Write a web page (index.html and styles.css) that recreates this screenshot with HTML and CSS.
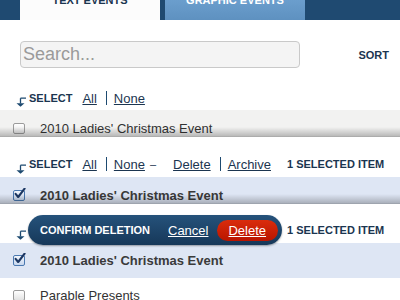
FILE: index.html
```html
<!DOCTYPE html>
<html>
<head>
<meta charset="utf-8">
<link rel="stylesheet" href="styles.css">
</head>
<body>
<div class="tabs">
  <div class="tab tab-active"><span class="tab-label">TEXT EVENTS</span></div>
  <div class="tab tab-graphic"><span class="tab-label">GRAPHIC EVENTS</span></div>
</div>

<div class="search-row">
  <input class="search" type="text" placeholder="Search...">
  <span class="sort">SORT</span>
</div>

<div class="toolbar tb-first">
  <svg class="arrow" width="10" height="10" viewBox="0 0 10 10"><path d="M4.5 1.2H10M4.5 1.2V6.5" stroke="#1d4a70" stroke-width="1.3" fill="none"/><path d="M0.5 6.2H8.5L4.5 9.8Z" fill="#1d4a70"/></svg>
  <span class="label">SELECT</span>
  <a class="link l-all">All</a><span class="sep"></span><a class="link">None</a>
</div>
<div class="row cut gray">
  <div class="row-inner">
    <span class="cb"></span>
    <span class="title">2010 Ladies' Christmas Event</span>
  </div>
</div>

<div class="toolbar tb-second">
  <svg class="arrow" width="10" height="10" viewBox="0 0 10 10"><path d="M4.5 1.2H10M4.5 1.2V6.5" stroke="#1d4a70" stroke-width="1.3" fill="none"/><path d="M0.5 6.2H8.5L4.5 9.8Z" fill="#1d4a70"/></svg>
  <span class="label">SELECT</span>
  <a class="link l-all">All</a><span class="sep"></span><a class="link">None</a>
  <span class="dash">–</span>
  <a class="link l-delete">Delete</a><span class="sep"></span><a class="link">Archive</a>
  <span class="count">1 SELECTED ITEM</span>
</div>
<div class="row cut blue">
  <div class="row-inner">
    <span class="cb checked"><svg class="tick" width="13" height="13" viewBox="0 0 13 13"><path d="M2.6 5.8L5.2 9L11.6 0.6" stroke="#1c3762" stroke-width="2.1" fill="none" stroke-linecap="round" stroke-linejoin="round"/></svg></span>
    <span class="title bold">2010 Ladies' Christmas Event</span>
  </div>
</div>

<div class="toolbar tb-third">
  <svg class="arrow" width="10" height="10" viewBox="0 0 10 10"><path d="M4.5 1.2H10M4.5 1.2V6.5" stroke="#1d4a70" stroke-width="1.3" fill="none"/><path d="M0.5 6.2H8.5L4.5 9.8Z" fill="#1d4a70"/></svg>
  <div class="confirm">
    <span class="confirm-label">CONFIRM DELETION</span>
    <a class="cancel">Cancel</a>
    <a class="danger">Delete</a>
  </div>
  <span class="count count-confirm">1 SELECTED ITEM</span>
</div>
<div class="row blue row-third">
  <div class="row-inner">
    <span class="cb checked"><svg class="tick" width="13" height="13" viewBox="0 0 13 13"><path d="M2.6 5.8L5.2 9L11.6 0.6" stroke="#1c3762" stroke-width="2.1" fill="none" stroke-linecap="round" stroke-linejoin="round"/></svg></span>
    <span class="title bold">2010 Ladies' Christmas Event</span>
  </div>
</div>
<div class="row">
  <div class="row-inner">
    <span class="cb"></span>
    <span class="title">Parable Presents</span>
  </div>
</div>
</body>
</html>
```

FILE: styles.css
```css
html, body {
  margin: 0;
  padding: 0;
  background: #fff;
}
body {
  width: 400px;
  height: 300px;
  overflow: hidden;
  font-family: "Liberation Sans", Arial, sans-serif;
  color: #1b3550;
}

.tabs {
  display: flex;
  height: 20px;
  background: #1f4a71;
  padding-left: 20px;
  gap: 5px;
}
.tab {
  width: 140px;
  height: 20px;
  text-align: center;
  overflow: visible;
}
.tab-label {
  display: block;
  margin-top: -5px;
  font-size: 11px;
  line-height: 11px;
  font-weight: bold;
}
.tab-active {
  background: #fcfcfc;
  color: #1b3550;
}
.tab-graphic {
  background: linear-gradient(#6b9ecd, #5e91c0);
  color: #fff;
}

.search-row {
  display: flex;
  align-items: center;
  justify-content: space-between;
  padding: 21px 11px 0 20px;
}
.search {
  box-sizing: border-box;
  width: 280px;
  height: 27px;
  margin: 0;
  padding: 0 0 0 2px;
  border: 1px solid #c9c9c9;
  border-radius: 4px;
  background: #f4f4f4;
  font-family: "Liberation Sans", Arial, sans-serif;
  font-size: 18px;
  color: #333;
  outline: none;
}
.search::placeholder {
  color: #9a9a9a;
}
.sort {
  font-size: 11px;
  font-weight: bold;
  color: #1b3550;
}

.toolbar {
  display: flex;
  align-items: center;
  padding-left: 16px;
  font-size: 13px;
}
.tb-first {
  height: 24px;
  margin-top: 18px;
}
.tb-second {
  height: 26px;
  margin-top: 14px;
}
.tb-third {
  height: 30px;
  margin-top: 11px;
  position: relative;
  z-index: 1;
}
.arrow {
  flex: none;
  align-self: flex-end;
  margin-bottom: 3px;
}
.tb-third .arrow {
  margin-bottom: 5px;
}
.label {
  margin-left: 3px;
  font-size: 11px;
  font-weight: bold;
}
.link {
  color: #1b3550;
  text-decoration: underline;
  font-size: 13px;
}
.l-all {
  margin-left: 10px;
}
.sep {
  width: 1px;
  height: 14px;
  background: #1d4a70;
  margin: 0 7px 0 9px;
}
.dash {
  margin: 0 17px 0 5px;
  font-size: 11px;
}
.count {
  margin-left: 16px;
  font-size: 11px;
  font-weight: bold;
  color: #1b3550;
}
.count-confirm {
  margin-left: 5px;
  margin-top: -1px;
}

.confirm {
  display: flex;
  align-items: center;
  height: 30px;
  box-sizing: border-box;
  margin-left: 2px;
  padding: 0 4px 0 12px;
  border-radius: 15px;
  background: linear-gradient(#25527b, #163859);
  box-shadow: 0 1px 2px rgba(0, 0, 0, 0.35);
  color: #fff;
}
.confirm-label {
  font-size: 11px;
  font-weight: bold;
}
.cancel {
  margin-left: 18px;
  color: #fff;
  text-decoration: underline;
  font-size: 13px;
}
.danger {
  margin-left: 9px;
  height: 21px;
  line-height: 21px;
  padding: 0 12px 0 11px;
  border-radius: 11px;
  background: linear-gradient(#da2c0c, #b91500);
  color: #fff;
  text-decoration: underline;
  font-size: 13px;
}

.row {
  height: 35px;
  color: #333;
}
.row-inner {
  display: flex;
  align-items: center;
  height: 35px;
  padding-left: 13px;
}
.cut {
  height: 27px;
  overflow: hidden;
  position: relative;
}
.cut .row-inner {
  height: 37px;
}
.cut::after {
  content: "";
  position: absolute;
  left: 0;
  right: 0;
  bottom: 0;
  height: 10px;
  background: linear-gradient(rgba(0, 0, 0, 0), rgba(0, 0, 0, 0.22) 85%, rgba(0, 0, 0, 0.32));
}
.gray {
  background: #f2f2f1;
}
.blue {
  background: #dee6f4;
}
.row-third {
  margin-top: -2px;
}
.cb {
  flex: none;
  position: relative;
  box-sizing: border-box;
  width: 12px;
  height: 11px;
  border: 1px solid #9b9b9b;
  border-radius: 2px;
  background: linear-gradient(#ffffff, #e2e2e2);
}
.cb.checked {
  border-color: #4b79b0;
  background: linear-gradient(#f2f6fc, #c7d7ee);
}
.tick {
  position: absolute;
  left: -1px;
  top: -3px;
}
.title {
  margin-left: 15px;
  font-size: 13px;
  color: #333;
}
.title.bold {
  font-weight: bold;
  color: #3a3a3a;
}
```
